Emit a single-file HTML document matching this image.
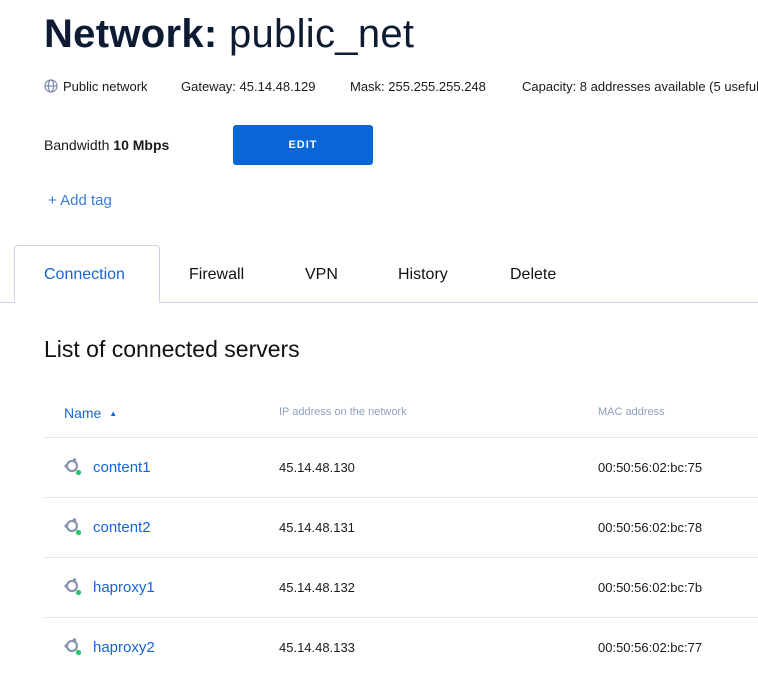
<!DOCTYPE html><html><head><style>
body{margin:0;width:758px;height:675px;overflow:hidden;background:#fff;font-family:"Liberation Sans",sans-serif;color:#1a1a1a;position:relative}
.a{position:absolute;white-space:nowrap}
h1{position:absolute;left:44px;top:12px;margin:0;font-size:40px;font-weight:normal;color:#0d1b33;letter-spacing:0.3px}
.m{font-size:13px;top:79px}
.tab{position:absolute;top:266px;font-size:16px;color:#111}
.line{position:absolute;left:44px;width:714px;height:1px;background:#e2e8f0}
.nm{position:absolute;left:93px;font-size:15px;color:#1565d8}
.ip{position:absolute;left:279px;font-size:13px}
.mac{position:absolute;left:598px;font-size:13px}
.ic{position:absolute;left:63px}
</style></head><body>
<h1><b>Network:</b> public_net</h1>
<svg class="a" style="left:44px;top:79px" width="14" height="14" viewBox="0 0 14 14" fill="none" stroke="#7c8bab" stroke-width="1.2"><circle cx="7" cy="7" r="6"/><ellipse cx="7" cy="7" rx="2.6" ry="6"/><path d="M1 7h12"/></svg>
<div class="a m" style="left:63px">Public network</div>
<div class="a m" style="left:181px">Gateway: 45.14.48.129</div>
<div class="a m" style="left:350px">Mask: 255.255.255.248</div>
<div class="a m" style="left:522px">Capacity: 8 addresses available (5 useful)</div>
<div class="a" style="left:44px;top:137px;font-size:14px">Bandwidth <b>10 Mbps</b></div>
<div class="a" style="left:233px;top:125px;width:140px;height:40px;background:#0866d6;border-radius:3px;color:#fff;font-size:11px;font-weight:bold;letter-spacing:1px;text-align:center;line-height:40px">EDIT</div>
<div class="a" style="left:48px;top:192px;font-size:15px;color:#3a7ad9">+ Add tag</div>
<div class="a" style="left:0;top:302px;width:758px;height:1px;background:#cbd5e4"></div>
<div class="a" style="left:14px;top:245px;width:144px;height:57px;border:1px solid #cbd5e4;border-bottom:none;border-radius:4px 4px 0 0;background:#fff"></div>
<div class="tab" style="left:44px;color:#1565d8">Connection</div>
<div class="tab" style="left:189px">Firewall</div>
<div class="tab" style="left:305px">VPN</div>
<div class="tab" style="left:398px">History</div>
<div class="tab" style="left:510px">Delete</div>
<div class="a" style="left:44px;top:336px;font-size:23px;color:#111">List of connected servers</div>
<div class="a" style="left:64px;top:405px;font-size:14px;color:#1565d8">Name <span style="font-size:8px;position:relative;top:-2px;margin-left:4px">▲</span></div>
<div class="a" style="left:279px;top:406px;font-size:11px;color:#8fa0bd">IP address on the network</div>
<div class="a" style="left:598px;top:406px;font-size:11px;color:#8fa0bd">MAC address</div>
<div class="line" style="top:437px"></div><div class="line" style="top:497px"></div><div class="line" style="top:557px"></div><div class="line" style="top:617px"></div>
<svg class="ic" style="top:457px" width="20" height="20" viewBox="0 0 20 20"><circle cx="9" cy="9" r="5" fill="none" stroke="#8894b0" stroke-width="2.2"/><circle cx="3.2" cy="9" r="1.8" fill="#8894b0"/><circle cx="11.5" cy="3" r="1.8" fill="#8894b0"/><circle cx="15.5" cy="15.5" r="2.6" fill="#26c46a"/></svg>
<svg class="ic" style="top:517px" width="20" height="20" viewBox="0 0 20 20"><circle cx="9" cy="9" r="5" fill="none" stroke="#8894b0" stroke-width="2.2"/><circle cx="3.2" cy="9" r="1.8" fill="#8894b0"/><circle cx="11.5" cy="3" r="1.8" fill="#8894b0"/><circle cx="15.5" cy="15.5" r="2.6" fill="#26c46a"/></svg>
<svg class="ic" style="top:577px" width="20" height="20" viewBox="0 0 20 20"><circle cx="9" cy="9" r="5" fill="none" stroke="#8894b0" stroke-width="2.2"/><circle cx="3.2" cy="9" r="1.8" fill="#8894b0"/><circle cx="11.5" cy="3" r="1.8" fill="#8894b0"/><circle cx="15.5" cy="15.5" r="2.6" fill="#26c46a"/></svg>
<svg class="ic" style="top:637px" width="20" height="20" viewBox="0 0 20 20"><circle cx="9" cy="9" r="5" fill="none" stroke="#8894b0" stroke-width="2.2"/><circle cx="3.2" cy="9" r="1.8" fill="#8894b0"/><circle cx="11.5" cy="3" r="1.8" fill="#8894b0"/><circle cx="15.5" cy="15.5" r="2.6" fill="#26c46a"/></svg>
<div class="nm" style="top:459px">content1</div><div class="ip" style="top:460px">45.14.48.130</div><div class="mac" style="top:460px">00:50:56:02:bc:75</div>
<div class="nm" style="top:519px">content2</div><div class="ip" style="top:520px">45.14.48.131</div><div class="mac" style="top:520px">00:50:56:02:bc:78</div>
<div class="nm" style="top:579px">haproxy1</div><div class="ip" style="top:580px">45.14.48.132</div><div class="mac" style="top:580px">00:50:56:02:bc:7b</div>
<div class="nm" style="top:639px">haproxy2</div><div class="ip" style="top:640px">45.14.48.133</div><div class="mac" style="top:640px">00:50:56:02:bc:77</div>
</body></html>
